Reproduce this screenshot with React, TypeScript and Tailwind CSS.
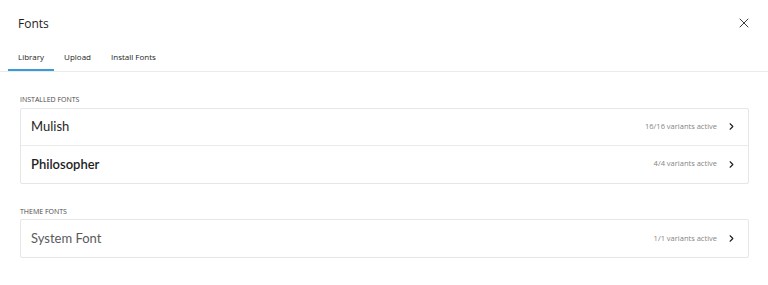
import React from 'react';
import { X, ChevronRight } from 'lucide-react';

const installed = [
  { name: 'Mulish', variants: '16/16 variants active', weight: 'font-normal' },
  { name: 'Philosopher', variants: '4/4 variants active', weight: 'font-semibold' },
];

const theme = [{ name: 'System Font', variants: '1/1 variants active', weight: 'font-normal' }];

const FontRow: React.FC<{ name: string; variants: string; weight: string; muted?: boolean; last?: boolean }> = ({
  name,
  variants,
  weight,
  muted,
  last,
}) => (
  <div
    className={`flex items-center justify-between h-[37px] pl-[10px] pr-[11px] ${last ? '' : 'border-b border-[#ebebeb]'}`}
  >
    <span
      className={`font-['Lato',sans-serif] text-[13px] mt-[1px] ${weight} ${muted ? 'text-[#5a5a5a]' : 'text-[#1e1e1e]'}`}
    >
      {name}
    </span>
    <div className="flex items-center gap-[9px]">
      <span className="text-[7.5px] text-[#858585]">{variants}</span>
      <ChevronRight size={11} strokeWidth={2.4} className="text-[#1e1e1e]" />
    </div>
  </div>
);

const App: React.FC = () => {
  return (
    <div className="w-[768px] h-[285px] bg-white font-['Open_Sans',sans-serif] text-[#1e1e1e]">
      <div className="flex items-center justify-between h-[46px] pl-[18px] pr-[16px]">
        <h1 className="text-[12px] font-medium mt-[1px]">Fonts</h1>
        <X size={16} strokeWidth={1.5} className="text-[#3c3c3c]" />
      </div>

      <div className="flex px-[8px] h-[26px] border-b border-[#ebebeb]">
        <button className="px-[10px] text-[8px] font-medium border-b-2 border-[#3a9bd6] pb-[2px]">Library</button>
        <button className="px-[10px] text-[8px] font-medium border-b-2 border-transparent pb-[2px]">Upload</button>
        <button className="px-[10px] text-[8px] font-medium border-b-2 border-transparent pb-[2px]">Install Fonts</button>
      </div>

      <div className="pl-[20px] pr-[19px] pt-[23px]">
        <p className="text-[7px] uppercase text-[#4a4a4a] mb-[2px]">Installed Fonts</p>
        <div className="border border-[#e6e6e6] rounded-[2px]">
          {installed.map((f, i) => (
            <FontRow key={f.name} {...f} last={i === installed.length - 1} />
          ))}
        </div>

        <p className="text-[7px] uppercase text-[#4a4a4a] mt-[23px] mb-[2px]">Theme Fonts</p>
        <div className="border border-[#e6e6e6] rounded-[2px]">
          {theme.map((f) => (
            <FontRow key={f.name} {...f} muted last />
          ))}
        </div>
      </div>
    </div>
  );
};

export default App;
